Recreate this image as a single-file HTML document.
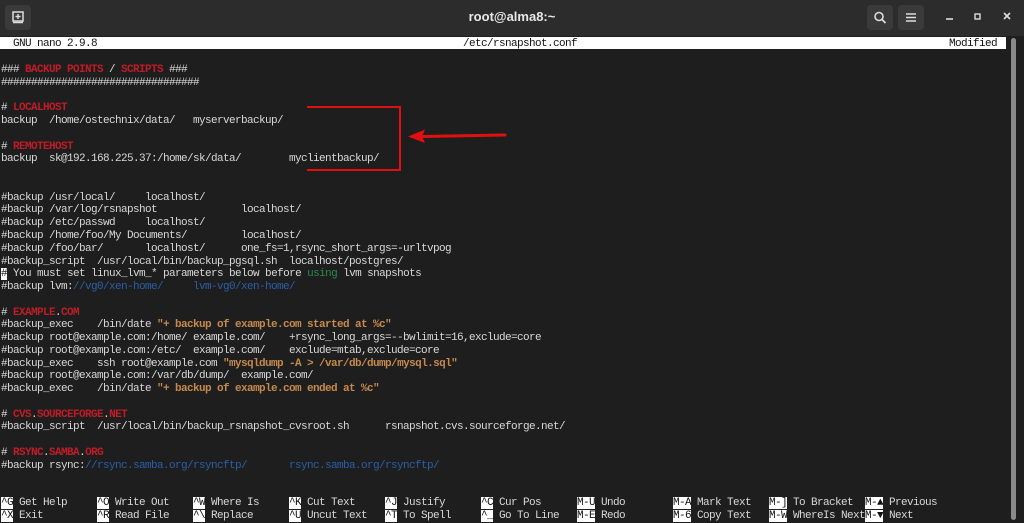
<!DOCTYPE html>
<html><head><meta charset="utf-8"><style>
*{margin:0;padding:0;box-sizing:border-box}
body{width:1024px;height:522px;overflow:hidden;background:#1e1e1e;font-family:"Liberation Mono","DejaVu Sans Mono",monospace;position:relative}
#tb{position:absolute;left:0;top:0;width:1024px;height:36px;background:#2c2c2c;}
.btn{position:absolute;top:5px;width:26px;height:25px;background:#3a3a3a;border-radius:4px}
#title{position:absolute;top:0;left:0;width:1024px;text-align:center;color:#e8e8e8;font-family:"Liberation Sans",sans-serif;font-weight:bold;font-size:13px;line-height:34px}
pre,.h,.sc{font-size:11px;letter-spacing:-0.6px;line-height:12.77px;white-space:pre;font-family:"Liberation Mono",monospace}
pre{position:absolute;left:1px;top:38.5px;color:#d8d8d8;tab-size:48px;-moz-tab-size:48px}
.r{color:#c01c28;font-weight:bold}.o{color:#c68a4c;font-weight:bold}.b{color:#2a5fa8}.g{color:#2a8a4a}
#hdr{position:absolute;left:0;top:37px;width:1006px;height:12px;background:#fff}
.h{position:absolute;top:38px;color:#111}
.k{background:#fff;color:#111}
.cur{background:#fff;color:#111}
.ln{position:absolute;background:#e01010}
.sc{position:absolute;color:#d8d8d8}
</style></head><body>
<div id="tb">
 <div class="btn" style="left:5px"><svg width="26" height="25"><rect x="8" y="7" width="10" height="9" fill="none" stroke="#ddd" stroke-width="1.5"/><path d="M13 9v5M10.5 11.5h5M8 17.5h10" stroke="#ddd" stroke-width="1.4"/></svg></div>
 <div id="title">root@alma8:~</div>
 <div class="btn" style="left:867px"><svg width="26" height="25"><circle cx="12" cy="11.5" r="4" fill="none" stroke="#ddd" stroke-width="1.6"/><path d="M15 14.5l3.5 3.5" stroke="#ddd" stroke-width="1.8"/></svg></div>
 <div class="btn" style="left:898px"><svg width="26" height="25"><path d="M8 9h10M8 12.5h10M8 16h10" stroke="#ddd" stroke-width="1.5"/></svg></div>
 <svg style="position:absolute;left:940px;top:0" width="84" height="36"><path d="M6 19h7" stroke="#ddd" stroke-width="1.6"/><rect x="35" y="14" width="5" height="5" fill="none" stroke="#ddd" stroke-width="1.4"/><path d="M64 13l6 6M70 13l-6 6" stroke="#ddd" stroke-width="1.6"/></svg>
</div>
<div id="hdr"></div>
<div class="h" style="left:13px">GNU nano 2.9.8</div>
<div class="h" style="left:463px">/etc/rsnapshot.conf</div>
<div class="h" style="left:949px">Modified</div>
<div style="position:absolute;left:1011px;top:38px;width:5px;height:482px;background:#8a8a8a;border-radius:3px"></div>
<pre>


### <span class="r">BACKUP POINTS</span> / <span class="r">SCRIPTS</span> ###
#################################

# <span class="r">LOCALHOST</span>
backup	/home/ostechnix/data/	myserverbackup/

# <span class="r">REMOTEHOST</span>
backup	sk@192.168.225.37:/home/sk/data/	myclientbackup/


#backup /usr/local/	localhost/
#backup /var/log/rsnapshot		localhost/
#backup /etc/passwd	localhost/
#backup /home/foo/My Documents/		localhost/
#backup /foo/bar/	localhost/	one_fs=1,rsync_short_args=-urltvpog
#backup_script	/usr/local/bin/backup_pgsql.sh	localhost/postgres/
<span class="cur">#</span> You must set linux_lvm_* parameters below before <span class="g">using</span> lvm snapshots
#backup lvm:<span class="b">//vg0/xen-home/</span>	<span class="b">lvm-vg0/xen-home/</span>

# <span class="r">EXAMPLE</span>.<span class="r">COM</span>
#backup_exec	/bin/date <span class="o">"+ backup of example.com started at %c"</span>
#backup root@example.com:/home/	example.com/	+rsync_long_args=--bwlimit=16,exclude=core
#backup root@example.com:/etc/	example.com/	exclude=mtab,exclude=core
#backup_exec	ssh root@example.com <span class="o">"mysqldump -A &gt; /var/db/dump/mysql.sql"</span>
#backup root@example.com:/var/db/dump/	example.com/
#backup_exec	/bin/date <span class="o">"+ backup of example.com ended at %c"</span>

# <span class="r">CVS</span>.<span class="r">SOURCEFORGE</span>.<span class="r">NET</span>
#backup_script	/usr/local/bin/backup_rsnapshot_cvsroot.sh	rsnapshot.cvs.sourceforge.net/

# <span class="r">RSYNC</span>.<span class="r">SAMBA</span>.<span class="r">ORG</span>
#backup rsync:<span class="b">//rsync.samba.org/rsyncftp/</span>	<span class="b">rsync.samba.org/rsyncftp/</span></pre>
<div class="sc" style="left:1px;top:497px"><span class="k">^G</span> Get Help
<span class="k">^X</span> Exit</div>
<div class="sc" style="left:97px;top:497px"><span class="k">^O</span> Write Out
<span class="k">^R</span> Read File</div>
<div class="sc" style="left:193px;top:497px"><span class="k">^W</span> Where Is
<span class="k">^\</span> Replace</div>
<div class="sc" style="left:289px;top:497px"><span class="k">^K</span> Cut Text
<span class="k">^U</span> Uncut Text</div>
<div class="sc" style="left:385px;top:497px"><span class="k">^J</span> Justify
<span class="k">^T</span> To Spell</div>
<div class="sc" style="left:481px;top:497px"><span class="k">^C</span> Cur Pos
<span class="k">^_</span> Go To Line</div>
<div class="sc" style="left:577px;top:497px"><span class="k">M-U</span> Undo
<span class="k">M-E</span> Redo</div>
<div class="sc" style="left:673px;top:497px"><span class="k">M-A</span> Mark Text
<span class="k">M-6</span> Copy Text</div>
<div class="sc" style="left:769px;top:497px"><span class="k">M-]</span> To Bracket
<span class="k">M-W</span> WhereIs Next</div>
<div class="sc" style="left:865px;top:497px"><span class="k">M-▲</span> Previous
<span class="k">M-▼</span> Next</div>
<div class="ln" style="left:307px;top:106px;width:94px;height:2px"></div>
<div class="ln" style="left:399px;top:106px;width:2px;height:64px"></div>
<div class="ln" style="left:307px;top:169px;width:94px;height:2px"></div>
<svg style="position:absolute;left:405px;top:126px" width="105" height="20"><path d="M100 9L18 10.5" stroke="#e01010" stroke-width="3" stroke-linecap="round"/><path d="M3 10.5L20 3.5L17 10.5L20 17Z" fill="#e01010"/></svg>
</body></html>
